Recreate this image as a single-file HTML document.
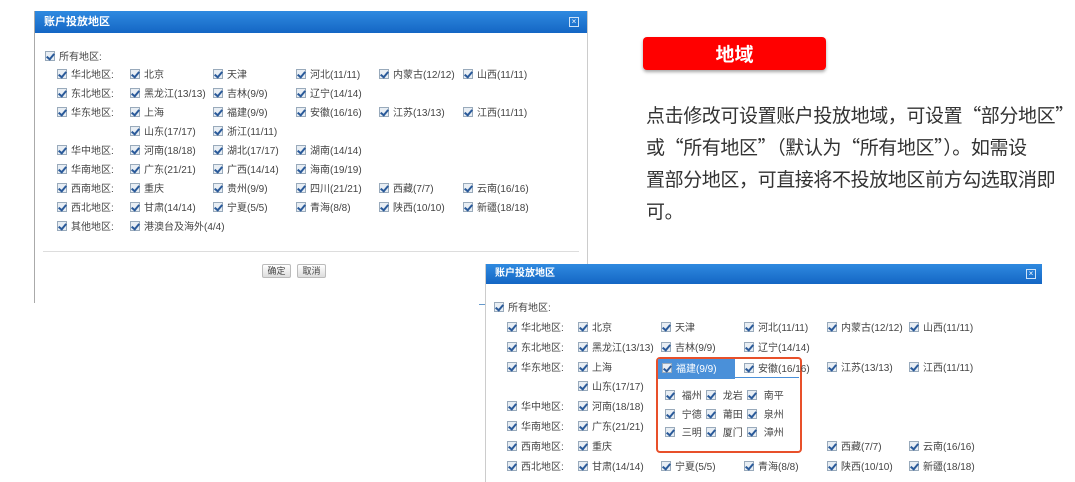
<!DOCTYPE html>
<html><head><meta charset="utf-8"><style>
*{margin:0;padding:0;box-sizing:border-box}
body{width:1075px;height:482px;background:#fff;position:relative;overflow:hidden;font-family:"Liberation Sans","Noto Sans CJK SC",sans-serif;font-size:10px;color:#444}
.d{position:absolute;background:#fff}
.t{position:absolute;left:0;right:0;top:0;background:linear-gradient(#2f8ae0,#1466c4);color:#fff;font-weight:bold;font-size:11px;padding-left:9px}
.x{position:absolute;width:10px;height:10px;border:1px solid #cfe3f7;color:#fff;font-size:8px;line-height:8px;text-align:center}
.i{position:absolute;white-space:nowrap;line-height:12px;height:12px}
.i b{display:inline-block;width:10px;height:10px;border:1px solid #9ab;background:#e8eef4;vertical-align:-1px;margin-right:4px;position:relative}
.i b:after{content:"";position:absolute;left:2px;top:0px;width:3px;height:6px;border-right:2px solid #2a5a9a;border-bottom:2px solid #2a5a9a;transform:rotate(40deg)}
.btn{position:absolute;height:14px;border:1px solid #bbb;background:linear-gradient(#fff,#ddd);font-size:9px;line-height:12px;text-align:center;border-radius:2px}
</style></head><body>
<!-- dialog 1 -->
<div class="d" style="left:34px;top:11px;width:554px;height:292px;border-left:1px solid #aaa;border-right:1px solid #ccc">
<div class="t" style="height:22px;line-height:22px">账户投放地区</div>
<div class="x" style="left:534px;top:6px">×</div>
<div style="position:absolute;left:8px;right:8px;top:240px;border-top:1px solid #ddd"></div>
<div class="btn" style="left:227px;top:253px;width:29px">确定</div>
<div class="btn" style="left:262px;top:253px;width:29px">取消</div>
</div>
<div class="i" style="left:45px;top:51px"><b></b>所有地区:</div>
<div class="i" style="left:57px;top:69px"><b></b>华北地区:</div>
<div class="i" style="left:130px;top:69px"><b></b>北京</div>
<div class="i" style="left:213px;top:69px"><b></b>天津</div>
<div class="i" style="left:296px;top:69px"><b></b>河北(11/11)</div>
<div class="i" style="left:379px;top:69px"><b></b>内蒙古(12/12)</div>
<div class="i" style="left:463px;top:69px"><b></b>山西(11/11)</div>
<div class="i" style="left:57px;top:88px"><b></b>东北地区:</div>
<div class="i" style="left:130px;top:88px"><b></b>黑龙江(13/13)</div>
<div class="i" style="left:213px;top:88px"><b></b>吉林(9/9)</div>
<div class="i" style="left:296px;top:88px"><b></b>辽宁(14/14)</div>
<div class="i" style="left:57px;top:107px"><b></b>华东地区:</div>
<div class="i" style="left:130px;top:107px"><b></b>上海</div>
<div class="i" style="left:213px;top:107px"><b></b>福建(9/9)</div>
<div class="i" style="left:296px;top:107px"><b></b>安徽(16/16)</div>
<div class="i" style="left:379px;top:107px"><b></b>江苏(13/13)</div>
<div class="i" style="left:463px;top:107px"><b></b>江西(11/11)</div>
<div class="i" style="left:130px;top:126px"><b></b>山东(17/17)</div>
<div class="i" style="left:213px;top:126px"><b></b>浙江(11/11)</div>
<div class="i" style="left:57px;top:145px"><b></b>华中地区:</div>
<div class="i" style="left:130px;top:145px"><b></b>河南(18/18)</div>
<div class="i" style="left:213px;top:145px"><b></b>湖北(17/17)</div>
<div class="i" style="left:296px;top:145px"><b></b>湖南(14/14)</div>
<div class="i" style="left:57px;top:164px"><b></b>华南地区:</div>
<div class="i" style="left:130px;top:164px"><b></b>广东(21/21)</div>
<div class="i" style="left:213px;top:164px"><b></b>广西(14/14)</div>
<div class="i" style="left:296px;top:164px"><b></b>海南(19/19)</div>
<div class="i" style="left:57px;top:183px"><b></b>西南地区:</div>
<div class="i" style="left:130px;top:183px"><b></b>重庆</div>
<div class="i" style="left:213px;top:183px"><b></b>贵州(9/9)</div>
<div class="i" style="left:296px;top:183px"><b></b>四川(21/21)</div>
<div class="i" style="left:379px;top:183px"><b></b>西藏(7/7)</div>
<div class="i" style="left:463px;top:183px"><b></b>云南(16/16)</div>
<div class="i" style="left:57px;top:202px"><b></b>西北地区:</div>
<div class="i" style="left:130px;top:202px"><b></b>甘肃(14/14)</div>
<div class="i" style="left:213px;top:202px"><b></b>宁夏(5/5)</div>
<div class="i" style="left:296px;top:202px"><b></b>青海(8/8)</div>
<div class="i" style="left:379px;top:202px"><b></b>陕西(10/10)</div>
<div class="i" style="left:463px;top:202px"><b></b>新疆(18/18)</div>
<div class="i" style="left:57px;top:221px"><b></b>其他地区:</div>
<div class="i" style="left:130px;top:221px"><b></b>港澳台及海外(4/4)</div>

<!-- red tag + text -->
<div style="position:absolute;left:643px;top:37px;width:183px;height:33px;background:#f00;border-radius:4px;box-shadow:0 2px 3px rgba(0,0,0,.35);color:#fff;font-weight:bold;font-size:19px;text-align:center;line-height:33px;font-family:'Noto Sans CJK SC',sans-serif">地域</div>
<div style="position:absolute;left:646px;top:99px;width:430px;font-size:19px;letter-spacing:-0.4px;line-height:32px;color:#333;white-space:nowrap;font-family:'Noto Sans CJK SC',sans-serif">点击修改可设置账户投放地域，可设置“部分地区”<br>或“所有地区”（默认为“所有地区”）。如需设<br>置部分地区，可直接将不投放地区前方勾选取消即<br>可。</div>

<!-- dialog 2 -->
<div class="d" style="left:485px;top:264px;width:557px;height:218px;border-left:1px solid #ccc">
<div class="t" style="height:20px;line-height:20px;font-size:10px">账户投放地区</div>
<div class="x" style="left:540px;top:5px">×</div>
</div>
<div style="position:absolute;left:479px;top:304px;width:6px;border-top:1px solid #69c"></div>
<div class="i" style="left:494px;top:302px"><b></b>所有地区:</div>
<div class="i" style="left:507px;top:322px"><b></b>华北地区:</div>
<div class="i" style="left:578px;top:322px"><b></b>北京</div>
<div class="i" style="left:661px;top:322px"><b></b>天津</div>
<div class="i" style="left:744px;top:322px"><b></b>河北(11/11)</div>
<div class="i" style="left:827px;top:322px"><b></b>内蒙古(12/12)</div>
<div class="i" style="left:909px;top:322px"><b></b>山西(11/11)</div>
<div class="i" style="left:507px;top:342px"><b></b>东北地区:</div>
<div class="i" style="left:578px;top:342px"><b></b>黑龙江(13/13)</div>
<div class="i" style="left:661px;top:342px"><b></b>吉林(9/9)</div>
<div class="i" style="left:744px;top:342px"><b></b>辽宁(14/14)</div>
<div class="i" style="left:507px;top:362px"><b></b>华东地区:</div>
<div class="i" style="left:578px;top:362px"><b></b>上海</div>
<div class="i" style="left:827px;top:362px"><b></b>江苏(13/13)</div>
<div class="i" style="left:909px;top:362px"><b></b>江西(11/11)</div>
<div class="i" style="left:578px;top:381px"><b></b>山东(17/17)</div>
<div class="i" style="left:507px;top:401px"><b></b>华中地区:</div>
<div class="i" style="left:578px;top:401px"><b></b>河南(18/18)</div>
<div class="i" style="left:507px;top:421px"><b></b>华南地区:</div>
<div class="i" style="left:578px;top:421px"><b></b>广东(21/21)</div>
<div class="i" style="left:507px;top:441px"><b></b>西南地区:</div>
<div class="i" style="left:578px;top:441px"><b></b>重庆</div>
<div class="i" style="left:827px;top:441px"><b></b>西藏(7/7)</div>
<div class="i" style="left:909px;top:441px"><b></b>云南(16/16)</div>
<div class="i" style="left:507px;top:461px"><b></b>西北地区:</div>
<div class="i" style="left:578px;top:461px"><b></b>甘肃(14/14)</div>
<div class="i" style="left:661px;top:461px"><b></b>宁夏(5/5)</div>
<div class="i" style="left:744px;top:461px"><b></b>青海(8/8)</div>
<div class="i" style="left:827px;top:461px"><b></b>陕西(10/10)</div>
<div class="i" style="left:909px;top:461px"><b></b>新疆(18/18)</div>

<!-- popup -->
<div style="position:absolute;left:656px;top:357px;width:146px;height:96px;border:2px solid #e8502a;border-radius:4px;background:#fff"></div>
<div style="position:absolute;left:658px;top:359px;width:77px;height:20px;background:#4a90d9"></div>
<div style="position:absolute;left:735px;top:377px;width:64px;border-top:1px solid #4a90d9"></div>
<div class="i" style="left:662px;top:363px;color:#fff"><b></b>福建(9/9)</div>
<div class="i" style="left:744px;top:363px"><b></b>安徽(16/16)</div>
<div class="i" style="left:665px;top:390px"><b></b>&nbsp;福州</div>
<div class="i" style="left:706px;top:390px"><b></b>&nbsp;龙岩</div>
<div class="i" style="left:747px;top:390px"><b></b>&nbsp;南平</div>
<div class="i" style="left:665px;top:409px"><b></b>&nbsp;宁德</div>
<div class="i" style="left:706px;top:409px"><b></b>&nbsp;莆田</div>
<div class="i" style="left:747px;top:409px"><b></b>&nbsp;泉州</div>
<div class="i" style="left:665px;top:427px"><b></b>&nbsp;三明</div>
<div class="i" style="left:706px;top:427px"><b></b>&nbsp;厦门</div>
<div class="i" style="left:747px;top:427px"><b></b>&nbsp;漳州</div>
</body></html>
